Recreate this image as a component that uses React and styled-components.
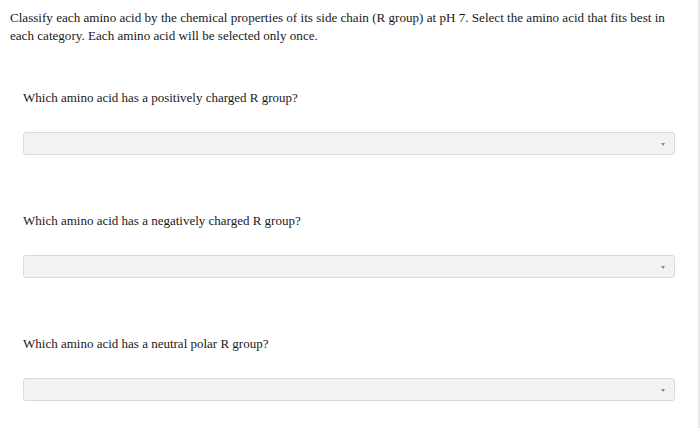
import React from 'react'
import styled, { createGlobalStyle } from 'styled-components'

const GlobalStyle = createGlobalStyle`
  html, body {
    margin: 0;
    padding: 0;
    background: #fff;
  }
  body {
    font-family: "Liberation Serif", "Times New Roman", serif;
    color: #1a1a1a;
  }
`

const Page = styled.div`
  width: 698px;
  min-height: 428px;
  border-right: 2px solid #e8e8e8;
  box-sizing: content-box;
`

const Intro = styled.p`
  margin: 0;
  padding: 9px 10px 0 10px;
  font-size: 13.1px;
  line-height: 18px;
`

const QuestionList = styled.div`
  display: flex;
  flex-direction: column;
  padding: 44px 23px 0 23px;
  gap: 57px;
`

const Question = styled.div`
  display: flex;
  flex-direction: column;
  gap: 25px;
`

const Prompt = styled.p`
  margin: 0;
  font-size: 13px;
  line-height: 18px;
`

const Dropdown = styled.div`
  position: relative;
  width: 652px;
  height: 23px;
  box-sizing: border-box;
  background: #f2f2f5;
  border: 1px solid #d9d9de;
  border-radius: 3px;
`

const Caret = styled.span`
  position: absolute;
  right: 9px;
  top: 10px;
  width: 0;
  height: 0;
  border-left: 2.5px solid transparent;
  border-right: 2.5px solid transparent;
  border-top: 3px solid #8a8a8a;
`

const questions = [
  'Which amino acid has a positively charged R group?',
  'Which amino acid has a negatively charged R group?',
  'Which amino acid has a neutral polar R group?',
]

export default function App() {
  return (
    <Page>
      <GlobalStyle />
      <Intro>
        Classify each amino acid by the chemical properties of its side chain (R group) at pH 7. Select the amino acid that fits best in each category. Each amino acid will be selected only once.
      </Intro>
      <QuestionList>
        {questions.map((q) => (
          <Question key={q}>
            <Prompt>{q}</Prompt>
            <Dropdown>
              <Caret />
            </Dropdown>
          </Question>
        ))}
      </QuestionList>
    </Page>
  )
}
